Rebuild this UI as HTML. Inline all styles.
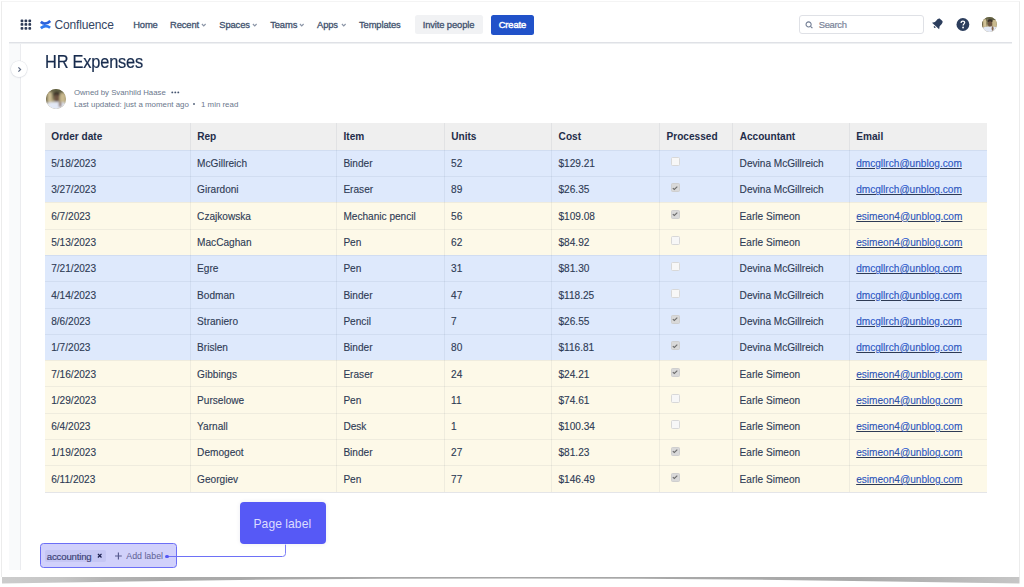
<!DOCTYPE html>
<html><head><meta charset="utf-8">
<style>
html,body{margin:0;padding:0;background:#fff;}
body{width:1024px;height:587px;position:relative;overflow:hidden;font-family:"Liberation Sans",sans-serif;}
.t{position:absolute;white-space:nowrap;line-height:1;}
.tb{position:absolute;}
.hl{position:absolute;height:1px;background:rgba(9,30,66,0.06);}
.vl{position:absolute;width:1px;background:rgba(9,30,66,0.06);}
.th{font-weight:bold;color:#1f2d4a;}
.td{color:#2e3b55;-webkit-text-stroke:0.12px #2e3b55;}
.em{color:#2a5bd7;text-decoration:underline;text-decoration-thickness:1px;text-underline-offset:0.6px;}
.cb{position:absolute;width:7px;height:7px;border:0.5px solid #d8d8d8;background:#f7f7f7;border-radius:1.5px;box-sizing:content-box;}
.cb.on{background:#d9d9d9;border-color:#cfcfcf;}
.cb svg{position:absolute;left:-0.5px;top:-0.5px;}
.nav{color:#42526e;font-size:9.4px;letter-spacing:-0.12px;font-weight:normal;-webkit-text-stroke:0.3px #42526e;}
.chev{position:absolute;}
</style></head><body>
<!-- window frame -->
<div style="position:absolute;left:1px;top:1px;width:1017px;height:575px;border:1px solid #ececec;border-top-color:#f4f4f4;border-bottom:none;"></div>
<!-- bottom curl shadow -->
<svg style="position:absolute;left:0;top:570px" width="1024" height="17">
 <defs>
  <linearGradient id="sg" x1="0" x2="1" y1="0" y2="0">
   <stop offset="0" stop-color="#cccccc"/><stop offset="0.06" stop-color="#c5c5c5"/><stop offset="0.1" stop-color="#b5b5b5"/><stop offset="0.16" stop-color="#aaaaaa"/><stop offset="0.5" stop-color="#a6a6a6"/><stop offset="0.84" stop-color="#aaaaaa"/><stop offset="0.92" stop-color="#b6b6b6"/><stop offset="1" stop-color="#c6c6c6"/>
  </linearGradient>
  <filter id="sb" x="-1%" y="-50%" width="102%" height="200%"><feGaussianBlur stdDeviation="0.45"/></filter>
 </defs>
 <path d="M2 6.9 L1019.5 6.9 L1019.5 13.6 Q510 3.2 2 13.6 Z" fill="url(#sg)" filter="url(#sb)"/>
</svg>

<!-- header -->
<div class="tb" style="left:9px;top:42px;width:1003px;height:1px;background:#dfe1e6"></div>
<div class="tb" style="left:9px;top:43px;width:1003px;height:1px;background:#eef0f2"></div>
<!-- grid icon -->
<svg style="position:absolute;left:20px;top:19px" width="12" height="11" viewBox="0 0 12 11">
 <g fill="#2d3b57"><rect x="0.6" y="0.45" width="2.75" height="2.75" rx="0.95"/><rect x="4.5" y="0.45" width="2.75" height="2.75" rx="0.95"/><rect x="8.4" y="0.45" width="2.75" height="2.75" rx="0.95"/><rect x="0.6" y="4.1" width="2.75" height="2.75" rx="0.95"/><rect x="4.5" y="4.1" width="2.75" height="2.75" rx="0.95"/><rect x="8.4" y="4.1" width="2.75" height="2.75" rx="0.95"/><rect x="0.6" y="7.95" width="2.75" height="2.75" rx="0.95"/><rect x="4.5" y="7.95" width="2.75" height="2.75" rx="0.95"/><rect x="8.4" y="7.95" width="2.75" height="2.75" rx="0.95"/></g>
</svg>
<!-- confluence logo -->
<svg style="position:absolute;left:39px;top:18px" width="13" height="13" viewBox="0 0 13 13">
 <path d="M1.8 3.9 Q6.2 7.6 11.3 2.9" fill="none" stroke="#2b63dc" stroke-width="2.7"/>
 <path d="M1.8 10.1 Q6.6 6.2 11.1 9.7" fill="none" stroke="#2f7af0" stroke-width="2.7"/>
</svg>
<div class="t" style="left:54.5px;top:18.64px;font-size:12px;color:#344563;letter-spacing:-0.15px">Confluence</div>
<div class="t nav" style="left:133.2px;top:20.3px">Home</div>
<div class="t nav" style="left:170px;top:20.3px">Recent</div>
<div class="t nav" style="left:219.3px;top:20.3px">Spaces</div>
<div class="t nav" style="left:270.2px;top:20.3px">Teams</div>
<div class="t nav" style="left:317px;top:20.3px">Apps</div>
<div class="t nav" style="left:359px;top:20.3px">Templates</div>
<svg class="chev" style="left:201.1px;top:22.6px" width="6" height="4"><path d="M0.9 1.0 L2.75 2.85 L4.6 1.0" fill="none" stroke="#8a94a6" stroke-width="1.15"/></svg>
<svg class="chev" style="left:251.8px;top:22.6px" width="6" height="4"><path d="M0.9 1.0 L2.75 2.85 L4.6 1.0" fill="none" stroke="#8a94a6" stroke-width="1.15"/></svg>
<svg class="chev" style="left:299.3px;top:22.6px" width="6" height="4"><path d="M0.9 1.0 L2.75 2.85 L4.6 1.0" fill="none" stroke="#8a94a6" stroke-width="1.15"/></svg>
<svg class="chev" style="left:340.8px;top:22.6px" width="6" height="4"><path d="M0.9 1.0 L2.75 2.85 L4.6 1.0" fill="none" stroke="#8a94a6" stroke-width="1.15"/></svg>
<!-- invite -->
<div class="tb" style="left:415px;top:14.6px;width:68px;height:19.8px;background:#f1f2f4;border-radius:2.5px"></div>
<div class="t nav" style="left:422.7px;top:20.3px;color:#42526e">Invite people</div>
<!-- create -->
<div class="tb" style="left:491px;top:14.5px;width:42.5px;height:20.1px;background:#2152c9;border-radius:2.5px"></div>
<div class="t nav" style="left:498.7px;top:20.3px;color:#fff;-webkit-text-stroke:0.45px #fff">Create</div>
<!-- search -->
<div class="tb" style="left:799px;top:15.2px;width:123px;height:17.3px;border:1px solid #dfe1e6;border-radius:3px;background:#fff"></div>
<svg style="position:absolute;left:804.5px;top:20.5px" width="9" height="9" viewBox="0 0 9 9"><circle cx="3.6" cy="3.4" r="2.55" fill="none" stroke="#6f7b92" stroke-width="1.05"/><path d="M5.5 5.3 L7.4 7.2" stroke="#6f7b92" stroke-width="1.15"/></svg>
<div class="t" style="left:818.7px;top:20.4px;font-size:9.4px;color:#7a8499;letter-spacing:-0.3px;-webkit-text-stroke:0.2px #7a8499">Search</div>
<!-- bell -->
<svg style="position:absolute;left:931.2px;top:17.2px" width="13.4" height="13.4" viewBox="0 0 14 14">
 <g transform="rotate(42 7 7)">
  <path d="M5.6 1.6 L8.4 1.6 C10 1.6 10.3 3.4 10.3 5 L10.3 7.6 L12 10.3 L2 10.3 L3.7 7.6 L3.7 5 C3.7 3.4 4 1.6 5.6 1.6 Z" fill="#2c3e5d"/>
  <rect x="6" y="11.1" width="2" height="1.3" rx="0.4" fill="#2c3e5d"/>
 </g>
</svg>
<!-- help -->
<svg style="position:absolute;left:956.3px;top:18.1px" width="14" height="13" viewBox="0 0 14 13">
 <circle cx="6.9" cy="6.5" r="6.4" fill="#2c3e5d"/>
 <path d="M5.1 4.9 C5.1 3.7 5.9 3.0 6.9 3.0 C8 3.0 8.7 3.7 8.7 4.6 C8.7 5.8 7.1 6 7.1 7.6" fill="none" stroke="#fff" stroke-width="1.25"/>
 <circle cx="7.05" cy="9.5" r="0.9" fill="#fff"/>
</svg>
<!-- avatar -->
<svg width="0" height="0" style="position:absolute">
 <defs>
  <filter id="blr" x="-20%" y="-20%" width="140%" height="140%"><feGaussianBlur stdDeviation="0.9"/></filter>
  <g id="av">
    <rect x="0" y="0" width="20" height="20" fill="#a89a72"/>
    <g filter="url(#blr)">
     <rect x="-2" y="-2" width="24" height="7" fill="#5f5e42"/>
     <rect x="1.5" y="3" width="4" height="10" fill="#d0c197"/>
     <rect x="14" y="4" width="5" height="9" fill="#c9b98e"/>
     <rect x="-2" y="5" width="3.5" height="9" fill="#6a6448"/>
     <rect x="6" y="2" width="2.5" height="8" fill="#7c7556"/>
     <ellipse cx="10.6" cy="5.2" rx="3.4" ry="2.4" fill="#3a3129"/>
     <ellipse cx="10.6" cy="9.2" rx="2.7" ry="3.6" fill="#6e5443"/>
     <path d="M-1 15 Q5 11.8 10 12.8 Q15 12 21 14.5 L21 22 L-1 22 Z" fill="#e2e8f5"/>
     <ellipse cx="14" cy="15.2" rx="1.3" ry="3" fill="#86664f"/>
    </g>
  </g>
 </defs>
</svg>
<div style="position:absolute;left:982.1px;top:16.9px;width:15.2px;height:15.2px;border-radius:50%;overflow:hidden"><svg width="15.2" height="15.2" viewBox="0 0 20 20" style="display:block"><use href="#av"/></svg></div>

<!-- sidebar -->
<div class="tb" style="left:9px;top:44px;width:11px;height:526px;background:#f9fafb"></div>
<div class="tb" style="left:20px;top:44px;width:1px;height:526px;background:#ebecef"></div>
<div class="tb" style="left:11.3px;top:61.3px;width:16.2px;height:16.2px;border-radius:50%;background:#fff;box-shadow:0 0 0 0.6px #e2e4e8, 0 0.5px 1.5px rgba(9,30,66,0.18)"></div>
<svg style="position:absolute;left:16px;top:66px" width="7" height="7"><path d="M2.4 1.3 L4.6 3.5 L2.4 5.7" fill="none" stroke="#5a6780" stroke-width="1.2"/></svg>

<!-- title -->
<div class="t" style="left:45.3px;top:54.2px;font-size:17.5px;color:#172b4d;letter-spacing:-0.2px;transform:scaleX(0.935);transform-origin:0 0;-webkit-text-stroke:0.2px #172b4d">HR Expenses</div>
<!-- byline avatar -->
<div style="position:absolute;left:45.9px;top:88.5px;width:20.2px;height:20.2px;border-radius:50%;overflow:hidden"><svg width="20.2" height="20.2" viewBox="0 0 20 20" style="display:block"><use href="#av"/></svg></div>
<div class="t" style="left:73.9px;top:88.7px;font-size:7.8px;color:#6b778c">Owned by Svanhild Haase</div>
<svg style="position:absolute;left:170.5px;top:90.5px" width="9" height="3"><circle cx="1.3" cy="1.4" r="0.95" fill="#44546f"/><circle cx="4.3" cy="1.4" r="0.95" fill="#44546f"/><circle cx="7.3" cy="1.4" r="0.95" fill="#44546f"/></svg>
<div class="t" style="left:73.9px;top:100.8px;font-size:7.9px;color:#6b778c">Last updated: just a moment ago</div>
<div class="tb" style="left:193px;top:103.4px;width:1.6px;height:1.6px;border-radius:50%;background:#6b778c"></div>
<div class="t" style="left:201px;top:100.8px;font-size:7.9px;color:#6b778c">1 min read</div>

<div class="tb" style="left:44.5px;top:123.0px;width:942.4px;height:26.60px;background:#efefef"></div>
<div class="tb" style="left:44.5px;top:149.60px;width:942.4px;height:26.32px;background:#dee9fc"></div>
<div class="tb" style="left:44.5px;top:175.92px;width:942.4px;height:26.32px;background:#dee9fc"></div>
<div class="tb" style="left:44.5px;top:202.24px;width:942.4px;height:26.32px;background:#fdf9e8"></div>
<div class="tb" style="left:44.5px;top:228.56px;width:942.4px;height:26.32px;background:#fdf9e8"></div>
<div class="tb" style="left:44.5px;top:254.88px;width:942.4px;height:26.32px;background:#dee9fc"></div>
<div class="tb" style="left:44.5px;top:281.20px;width:942.4px;height:26.32px;background:#dee9fc"></div>
<div class="tb" style="left:44.5px;top:307.52px;width:942.4px;height:26.32px;background:#dee9fc"></div>
<div class="tb" style="left:44.5px;top:333.84px;width:942.4px;height:26.32px;background:#dee9fc"></div>
<div class="tb" style="left:44.5px;top:360.16px;width:942.4px;height:26.32px;background:#fdf9e8"></div>
<div class="tb" style="left:44.5px;top:386.48px;width:942.4px;height:26.32px;background:#fdf9e8"></div>
<div class="tb" style="left:44.5px;top:412.80px;width:942.4px;height:26.32px;background:#fdf9e8"></div>
<div class="tb" style="left:44.5px;top:439.12px;width:942.4px;height:26.32px;background:#fdf9e8"></div>
<div class="tb" style="left:44.5px;top:465.44px;width:942.4px;height:26.32px;background:#fdf9e8"></div>
<div class="hl" style="left:44.5px;top:149.60px;width:942.4px"></div>
<div class="hl" style="left:44.5px;top:175.92px;width:942.4px"></div>
<div class="hl" style="left:44.5px;top:202.24px;width:942.4px"></div>
<div class="hl" style="left:44.5px;top:228.56px;width:942.4px"></div>
<div class="hl" style="left:44.5px;top:254.88px;width:942.4px"></div>
<div class="hl" style="left:44.5px;top:281.20px;width:942.4px"></div>
<div class="hl" style="left:44.5px;top:307.52px;width:942.4px"></div>
<div class="hl" style="left:44.5px;top:333.84px;width:942.4px"></div>
<div class="hl" style="left:44.5px;top:360.16px;width:942.4px"></div>
<div class="hl" style="left:44.5px;top:386.48px;width:942.4px"></div>
<div class="hl" style="left:44.5px;top:412.80px;width:942.4px"></div>
<div class="hl" style="left:44.5px;top:439.12px;width:942.4px"></div>
<div class="hl" style="left:44.5px;top:465.44px;width:942.4px"></div>
<div class="hl" style="left:44.5px;top:491.76px;width:942.4px;background:#e4e5e8"></div>
<div class="vl" style="left:189.9px;top:123.0px;height:368.76px"></div>
<div class="vl" style="left:336.2px;top:123.0px;height:368.76px"></div>
<div class="vl" style="left:443.9px;top:123.0px;height:368.76px"></div>
<div class="vl" style="left:551.3px;top:123.0px;height:368.76px"></div>
<div class="vl" style="left:659.2px;top:123.0px;height:368.76px"></div>
<div class="vl" style="left:732.4px;top:123.0px;height:368.76px"></div>
<div class="vl" style="left:849.0px;top:123.0px;height:368.76px"></div>
<div class="t th" style="left:51.30px;top:132.05px;font-size:10.1px;">Order date</div>
<div class="t th" style="left:197.20px;top:132.05px;font-size:10.1px;">Rep</div>
<div class="t th" style="left:343.50px;top:132.05px;font-size:10.1px;">Item</div>
<div class="t th" style="left:451.20px;top:132.05px;font-size:10.1px;">Units</div>
<div class="t th" style="left:558.60px;top:132.05px;font-size:10.1px;">Cost</div>
<div class="t th" style="left:666.50px;top:132.05px;font-size:10.1px;">Processed</div>
<div class="t th" style="left:739.70px;top:132.05px;font-size:10.1px;">Accountant</div>
<div class="t th" style="left:856.30px;top:132.05px;font-size:10.1px;">Email</div>
<div class="t td" style="left:51.20px;top:158.95px;font-size:10.1px;">5/18/2023</div>
<div class="t td" style="left:197.10px;top:158.95px;font-size:10.1px;">McGillreich</div>
<div class="t td" style="left:343.40px;top:158.95px;font-size:10.1px;">Binder</div>
<div class="t td" style="left:451.10px;top:158.95px;font-size:10.1px;">52</div>
<div class="t td" style="left:558.50px;top:158.95px;font-size:10.1px;">$129.21</div>
<div class="cb" style="left:670.8px;top:157.00px"></div>
<div class="t td" style="left:739.60px;top:158.95px;font-size:10.1px;">Devina McGillreich</div>
<div class="t td em" style="left:856.20px;top:158.95px;font-size:10.1px;">dmcgllrch@unblog.com</div>
<div class="t td" style="left:51.20px;top:185.27px;font-size:10.1px;">3/27/2023</div>
<div class="t td" style="left:197.10px;top:185.27px;font-size:10.1px;">Girardoni</div>
<div class="t td" style="left:343.40px;top:185.27px;font-size:10.1px;">Eraser</div>
<div class="t td" style="left:451.10px;top:185.27px;font-size:10.1px;">89</div>
<div class="t td" style="left:558.50px;top:185.27px;font-size:10.1px;">$26.35</div>
<div class="cb on" style="left:670.8px;top:183.32px"><svg width="8" height="8" viewBox="0 0 8 8"><path d="M1.8 4.1 L3.3 5.5 L6.3 2.6" fill="none" stroke="#6b6b6b" stroke-width="1.1"/></svg></div>
<div class="t td" style="left:739.60px;top:185.27px;font-size:10.1px;">Devina McGillreich</div>
<div class="t td em" style="left:856.20px;top:185.27px;font-size:10.1px;">dmcgllrch@unblog.com</div>
<div class="t td" style="left:51.20px;top:211.59px;font-size:10.1px;">6/7/2023</div>
<div class="t td" style="left:197.10px;top:211.59px;font-size:10.1px;">Czajkowska</div>
<div class="t td" style="left:343.40px;top:211.59px;font-size:10.1px;">Mechanic pencil</div>
<div class="t td" style="left:451.10px;top:211.59px;font-size:10.1px;">56</div>
<div class="t td" style="left:558.50px;top:211.59px;font-size:10.1px;">$109.08</div>
<div class="cb on" style="left:670.8px;top:209.64px"><svg width="8" height="8" viewBox="0 0 8 8"><path d="M1.8 4.1 L3.3 5.5 L6.3 2.6" fill="none" stroke="#6b6b6b" stroke-width="1.1"/></svg></div>
<div class="t td" style="left:739.60px;top:211.59px;font-size:10.1px;">Earle Simeon</div>
<div class="t td em" style="left:856.20px;top:211.59px;font-size:10.1px;">esimeon4@unblog.com</div>
<div class="t td" style="left:51.20px;top:237.91px;font-size:10.1px;">5/13/2023</div>
<div class="t td" style="left:197.10px;top:237.91px;font-size:10.1px;">MacCaghan</div>
<div class="t td" style="left:343.40px;top:237.91px;font-size:10.1px;">Pen</div>
<div class="t td" style="left:451.10px;top:237.91px;font-size:10.1px;">62</div>
<div class="t td" style="left:558.50px;top:237.91px;font-size:10.1px;">$84.92</div>
<div class="cb" style="left:670.8px;top:235.96px"></div>
<div class="t td" style="left:739.60px;top:237.91px;font-size:10.1px;">Earle Simeon</div>
<div class="t td em" style="left:856.20px;top:237.91px;font-size:10.1px;">esimeon4@unblog.com</div>
<div class="t td" style="left:51.20px;top:264.23px;font-size:10.1px;">7/21/2023</div>
<div class="t td" style="left:197.10px;top:264.23px;font-size:10.1px;">Egre</div>
<div class="t td" style="left:343.40px;top:264.23px;font-size:10.1px;">Pen</div>
<div class="t td" style="left:451.10px;top:264.23px;font-size:10.1px;">31</div>
<div class="t td" style="left:558.50px;top:264.23px;font-size:10.1px;">$81.30</div>
<div class="cb" style="left:670.8px;top:262.28px"></div>
<div class="t td" style="left:739.60px;top:264.23px;font-size:10.1px;">Devina McGillreich</div>
<div class="t td em" style="left:856.20px;top:264.23px;font-size:10.1px;">dmcgllrch@unblog.com</div>
<div class="t td" style="left:51.20px;top:290.55px;font-size:10.1px;">4/14/2023</div>
<div class="t td" style="left:197.10px;top:290.55px;font-size:10.1px;">Bodman</div>
<div class="t td" style="left:343.40px;top:290.55px;font-size:10.1px;">Binder</div>
<div class="t td" style="left:451.10px;top:290.55px;font-size:10.1px;">47</div>
<div class="t td" style="left:558.50px;top:290.55px;font-size:10.1px;">$118.25</div>
<div class="cb" style="left:670.8px;top:288.60px"></div>
<div class="t td" style="left:739.60px;top:290.55px;font-size:10.1px;">Devina McGillreich</div>
<div class="t td em" style="left:856.20px;top:290.55px;font-size:10.1px;">dmcgllrch@unblog.com</div>
<div class="t td" style="left:51.20px;top:316.87px;font-size:10.1px;">8/6/2023</div>
<div class="t td" style="left:197.10px;top:316.87px;font-size:10.1px;">Straniero</div>
<div class="t td" style="left:343.40px;top:316.87px;font-size:10.1px;">Pencil</div>
<div class="t td" style="left:451.10px;top:316.87px;font-size:10.1px;">7</div>
<div class="t td" style="left:558.50px;top:316.87px;font-size:10.1px;">$26.55</div>
<div class="cb on" style="left:670.8px;top:314.92px"><svg width="8" height="8" viewBox="0 0 8 8"><path d="M1.8 4.1 L3.3 5.5 L6.3 2.6" fill="none" stroke="#6b6b6b" stroke-width="1.1"/></svg></div>
<div class="t td" style="left:739.60px;top:316.87px;font-size:10.1px;">Devina McGillreich</div>
<div class="t td em" style="left:856.20px;top:316.87px;font-size:10.1px;">dmcgllrch@unblog.com</div>
<div class="t td" style="left:51.20px;top:343.19px;font-size:10.1px;">1/7/2023</div>
<div class="t td" style="left:197.10px;top:343.19px;font-size:10.1px;">Brislen</div>
<div class="t td" style="left:343.40px;top:343.19px;font-size:10.1px;">Binder</div>
<div class="t td" style="left:451.10px;top:343.19px;font-size:10.1px;">80</div>
<div class="t td" style="left:558.50px;top:343.19px;font-size:10.1px;">$116.81</div>
<div class="cb on" style="left:670.8px;top:341.24px"><svg width="8" height="8" viewBox="0 0 8 8"><path d="M1.8 4.1 L3.3 5.5 L6.3 2.6" fill="none" stroke="#6b6b6b" stroke-width="1.1"/></svg></div>
<div class="t td" style="left:739.60px;top:343.19px;font-size:10.1px;">Devina McGillreich</div>
<div class="t td em" style="left:856.20px;top:343.19px;font-size:10.1px;">dmcgllrch@unblog.com</div>
<div class="t td" style="left:51.20px;top:369.51px;font-size:10.1px;">7/16/2023</div>
<div class="t td" style="left:197.10px;top:369.51px;font-size:10.1px;">Gibbings</div>
<div class="t td" style="left:343.40px;top:369.51px;font-size:10.1px;">Eraser</div>
<div class="t td" style="left:451.10px;top:369.51px;font-size:10.1px;">24</div>
<div class="t td" style="left:558.50px;top:369.51px;font-size:10.1px;">$24.21</div>
<div class="cb on" style="left:670.8px;top:367.56px"><svg width="8" height="8" viewBox="0 0 8 8"><path d="M1.8 4.1 L3.3 5.5 L6.3 2.6" fill="none" stroke="#6b6b6b" stroke-width="1.1"/></svg></div>
<div class="t td" style="left:739.60px;top:369.51px;font-size:10.1px;">Earle Simeon</div>
<div class="t td em" style="left:856.20px;top:369.51px;font-size:10.1px;">esimeon4@unblog.com</div>
<div class="t td" style="left:51.20px;top:395.83px;font-size:10.1px;">1/29/2023</div>
<div class="t td" style="left:197.10px;top:395.83px;font-size:10.1px;">Purselowe</div>
<div class="t td" style="left:343.40px;top:395.83px;font-size:10.1px;">Pen</div>
<div class="t td" style="left:451.10px;top:395.83px;font-size:10.1px;">11</div>
<div class="t td" style="left:558.50px;top:395.83px;font-size:10.1px;">$74.61</div>
<div class="cb" style="left:670.8px;top:393.88px"></div>
<div class="t td" style="left:739.60px;top:395.83px;font-size:10.1px;">Earle Simeon</div>
<div class="t td em" style="left:856.20px;top:395.83px;font-size:10.1px;">esimeon4@unblog.com</div>
<div class="t td" style="left:51.20px;top:422.15px;font-size:10.1px;">6/4/2023</div>
<div class="t td" style="left:197.10px;top:422.15px;font-size:10.1px;">Yarnall</div>
<div class="t td" style="left:343.40px;top:422.15px;font-size:10.1px;">Desk</div>
<div class="t td" style="left:451.10px;top:422.15px;font-size:10.1px;">1</div>
<div class="t td" style="left:558.50px;top:422.15px;font-size:10.1px;">$100.34</div>
<div class="cb" style="left:670.8px;top:420.20px"></div>
<div class="t td" style="left:739.60px;top:422.15px;font-size:10.1px;">Earle Simeon</div>
<div class="t td em" style="left:856.20px;top:422.15px;font-size:10.1px;">esimeon4@unblog.com</div>
<div class="t td" style="left:51.20px;top:448.47px;font-size:10.1px;">1/19/2023</div>
<div class="t td" style="left:197.10px;top:448.47px;font-size:10.1px;">Demogeot</div>
<div class="t td" style="left:343.40px;top:448.47px;font-size:10.1px;">Binder</div>
<div class="t td" style="left:451.10px;top:448.47px;font-size:10.1px;">27</div>
<div class="t td" style="left:558.50px;top:448.47px;font-size:10.1px;">$81.23</div>
<div class="cb on" style="left:670.8px;top:446.52px"><svg width="8" height="8" viewBox="0 0 8 8"><path d="M1.8 4.1 L3.3 5.5 L6.3 2.6" fill="none" stroke="#6b6b6b" stroke-width="1.1"/></svg></div>
<div class="t td" style="left:739.60px;top:448.47px;font-size:10.1px;">Earle Simeon</div>
<div class="t td em" style="left:856.20px;top:448.47px;font-size:10.1px;">esimeon4@unblog.com</div>
<div class="t td" style="left:51.20px;top:474.79px;font-size:10.1px;">6/11/2023</div>
<div class="t td" style="left:197.10px;top:474.79px;font-size:10.1px;">Georgiev</div>
<div class="t td" style="left:343.40px;top:474.79px;font-size:10.1px;">Pen</div>
<div class="t td" style="left:451.10px;top:474.79px;font-size:10.1px;">77</div>
<div class="t td" style="left:558.50px;top:474.79px;font-size:10.1px;">$146.49</div>
<div class="cb on" style="left:670.8px;top:472.84px"><svg width="8" height="8" viewBox="0 0 8 8"><path d="M1.8 4.1 L3.3 5.5 L6.3 2.6" fill="none" stroke="#6b6b6b" stroke-width="1.1"/></svg></div>
<div class="t td" style="left:739.60px;top:474.79px;font-size:10.1px;">Earle Simeon</div>
<div class="t td em" style="left:856.20px;top:474.79px;font-size:10.1px;">esimeon4@unblog.com</div>


<!-- labels -->
<div class="tb" style="left:240px;top:501.7px;width:85.6px;height:42.7px;background:#5659f6;border-radius:4px;box-shadow:0 0 4px rgba(60,60,120,0.10)"></div>
<div class="t" style="left:253.5px;top:517.9px;font-size:12.1px;color:#dcdcff;letter-spacing:0.05px">Page label</div>
<svg style="position:absolute;left:160px;top:540px" width="130" height="20">
 <path d="M125.5 4.6 L125.5 13.5 Q125.5 16.5 122.5 16.5 L7.3 16.5" fill="none" stroke="#7c7ff7" stroke-width="1"/>
</svg>
<div class="tb" style="left:40px;top:543.4px;width:136.9px;height:24.3px;box-sizing:border-box;border:1.7px solid #6c6ff6;background:#d1d1fb;border-radius:3.5px"></div>
<div class="tb" style="left:44.6px;top:549.9px;width:61.1px;height:12px;background:#c5c6f4;border-radius:2px"></div>
<div class="t" style="left:46.8px;top:551.6px;font-size:9.6px;color:#3a3e74;letter-spacing:-0.17px;-webkit-text-stroke:0.15px #3a3e74">accounting</div>
<svg style="position:absolute;left:97px;top:553.2px" width="6" height="6"><path d="M0.9 0.9 L4.5 4.5 M4.5 0.9 L0.9 4.5" stroke="#1c2050" stroke-width="1.25"/></svg>
<svg style="position:absolute;left:114px;top:552px" width="9" height="8"><path d="M4.4 0.6 L4.4 7.4 M1 4 L7.8 4" stroke="#575a8f" stroke-width="1.15"/></svg>
<div class="t" style="left:126.3px;top:551.5px;font-size:8.8px;color:#5d6095">Add label</div>
<svg style="position:absolute;left:160px;top:540px" width="130" height="20"><path d="M7.3 16.5 L122 16.5" fill="none" stroke="#6e71f6" stroke-width="1"/></svg>
<div class="tb" style="left:165.4px;top:554.6px;width:3.8px;height:3.8px;border-radius:50%;background:#5457f5"></div>
</body></html>
